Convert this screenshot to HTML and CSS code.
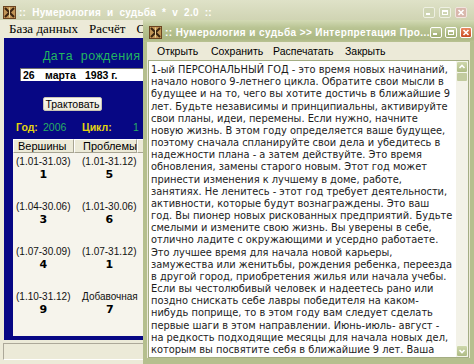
FILE: index.html
```html
<!DOCTYPE html>
<html lang="ru">
<head>
<meta charset="utf-8">
<title>Нумерология и судьба</title>
<link rel="stylesheet" href="styles.css">
</head>
<body>
<div class="main">
  <div class="title title-main">
    <svg class="ticon" viewBox="0 0 13 13" width="13" height="13">
      <rect x="0" y="0" width="13" height="13" fill="#c09455"/>
      <rect x="0.5" y="0.5" width="12" height="12" fill="none" stroke="#6b4420"/>
      <path d="M2 2 L11 11 M11 2 L2 11" stroke="#3a2410" stroke-width="2"/>
      <path d="M6.5 1.5 L6.5 11.5" stroke="#e8d29a" stroke-width="1"/>
    </svg>
    <span class="ttext ttext-main">:: Нумерология и судьба * v 2.0 ::</span>
    <div class="tbtns">
      <span class="tb tb-min inact"><i></i></span>
      <span class="tb tb-max inact"><i></i></span>
      <span class="tb tb-close inact-close">
        <svg viewBox="0 0 10 9" width="10" height="9"><path d="M2.5 2 L7.5 7 M7.5 2 L2.5 7" stroke="#fff" stroke-width="1.6"/></svg>
      </span>
    </div>
  </div>
  <div class="menubar">
    <span>База данных</span><span>Расчёт</span><span>О программе</span>
  </div>
  <div class="client">
    <div class="heading">Дата рождения</div>
    <div class="datebox"><span class="d-day">26</span><span class="d-mon">марта</span><span>1983 г.</span></div>
    <button class="btn" type="button">Трактовать</button>
    <div class="yearrow">
      <span class="lbl lbl-god">Год:</span><span class="val val-god">2006</span><span class="lbl lbl-cyc">Цикл:</span><span class="val">1</span>
    </div>
    <div class="grid">
      <div class="ghead">
        <div class="gh gh1">Вершины</div>
        <div class="gh gh2">Проблемы</div>
        <div class="gh gh3"></div>
      </div>
      <div class="gbody">
        <div class="cell c1"><span class="dt">(1.01-31.03)</span><span class="num">1</span></div>
        <div class="cell c2"><span class="dt">(1.01-31.12)</span><span class="num">5</span></div>
        <div class="cell c1"><span class="dt">(1.04-30.06)</span><span class="num">3</span></div>
        <div class="cell c2"><span class="dt">(1.01-30.06)</span><span class="num">6</span></div>
        <div class="cell c1"><span class="dt">(1.07-30.09)</span><span class="num">4</span></div>
        <div class="cell c2"><span class="dt">(1.07-31.12)</span><span class="num">1</span></div>
        <div class="cell c1"><span class="dt">(1.10-31.12)</span><span class="num">9</span></div>
        <div class="cell c2"><span class="dt">Добавочная</span><span class="num">7</span></div>
      </div>
    </div>
  </div>
  <div class="status"><div class="spanel"></div></div>
</div>

<div class="win2">
  <div class="title title-act">
    <svg class="ticon" viewBox="0 0 13 13" width="13" height="13">
      <rect x="0" y="0" width="13" height="13" fill="#c09455"/>
      <rect x="0.5" y="0.5" width="12" height="12" fill="none" stroke="#6b4420"/>
      <path d="M2 2 L11 11 M11 2 L2 11" stroke="#3a2410" stroke-width="2"/>
      <path d="M6.5 1.5 L6.5 11.5" stroke="#e8d29a" stroke-width="1"/>
    </svg>
    <span class="ttext ttext-act">:: Нумерология и судьба &gt;&gt; Интерпретация Про...</span>
    <div class="tbtns tbtns2">
      <span class="tb tb-min act"><i></i></span>
      <span class="tb tb-max act"><i></i></span>
      <span class="tb tb-close act-close">
        <svg viewBox="0 0 10 9" width="10" height="9"><path d="M2.5 2 L7.5 7 M7.5 2 L2.5 7" stroke="#fff" stroke-width="1.6"/></svg>
      </span>
    </div>
  </div>
  <div class="body2">
    <div class="toolbar">
      <span class="ti ti1">Открыть</span><span class="ti ti2">Сохранить</span><span class="ti ti3">Распечатать</span><span class="ti">Закрыть</span>
    </div>
    <div class="edit">
      <div class="text">1-ый ПЕРСОНАЛЬНЫЙ ГОД - это время новых начинаний,<br>начало нового 9-летнего цикла. Обратите свои мысли в<br>будущее и на то, чего вы хотите достичь в ближайшие 9<br>лет. Будьте независимы и принципиальны, активируйте<br>свои планы, идеи, перемены. Если нужно, начните<br>новую жизнь. В этом году определяется ваше будущее,<br>поэтому сначала спланируйте свои дела и убедитесь в<br>надежности плана - а затем действуйте. Это время<br>обновления, замены старого новым. Этот год может<br>принести изменения к лучшему в доме, работе,<br>занятиях. Не ленитесь - этот год требует деятельности,<br>активности, которые будут вознаграждены. Это ваш<br>год. Вы пионер новых рискованных предприятий. Будьте<br>смелыми и измените свою жизнь. Вы уверены в себе,<br>отлично ладите с окружающими и усердно работаете.<br>Это лучшее время для начала новой карьеры,<br>замужества или женитьбы, рождения ребенка, переезда<br>в другой город, приобретения жилья или начала учебы.<br>Если вы честолюбивый человек и надеетесь рано или<br>поздно снискать себе лавры победителя на каком-<br>нибудь поприще, то в этом году вам следует сделать<br>первые шаги в этом направлении. Июнь-июль- август -<br>на редкость подходящие месяцы для начала новых дел,<br>которым вы посвятите себя в ближайшие 9 лет. Ваша</div>
      <div class="sbar">
        <span class="sbtn"><svg viewBox="0 0 10 10" width="10" height="10"><path d="M2.5 6 L5 3.5 L7.5 6" fill="none" stroke="#fff" stroke-width="1.6"/></svg></span>
        <span class="sthumb"></span>
        <span class="strack"></span>
        <span class="sbtn"><svg viewBox="0 0 10 10" width="10" height="10"><path d="M2.5 4 L5 6.5 L7.5 4" fill="none" stroke="#fff" stroke-width="1.6"/></svg></span>
      </div>
    </div>
  </div>
</div>
</body>
</html>
```

FILE: styles.css
```css
* { box-sizing: border-box; }
html, body { margin: 0; padding: 0; }
body {
  width: 474px;
  height: 364px;
  overflow: hidden;
  position: relative;
  background: #ecead8;
  font-family: "Liberation Sans", Arial, sans-serif;
}

/* ---------- main window ---------- */
.main {
  width: 474px;
  height: 364px;
  display: flex;
  flex-direction: column;
  background: #ecead8;
}
.title {
  display: flex;
  align-items: center;
  flex: none;
}
.title-main {
  height: 20px;
  padding: 4px 0 0 3px;
  background: linear-gradient(#dfe2c8, #d0d4b3);
}
.ticon { flex: none; display: block; }
.ttext {
  color: #fff;
  font-weight: bold;
  font-size: 10px;
  margin-left: 3px;
  white-space: nowrap;
}
.ttext-main { letter-spacing: 0.25px; word-spacing: 3px; }
.ttext-act { letter-spacing: 0.4px; }
.tbtns {
  margin-left: auto;
  display: flex;
  gap: 4px;
  padding-right: 7px;
}
.tb {
  width: 12px;
  height: 11px;
  border: 1px solid #fff;
  border-radius: 2px;
  position: relative;
  display: flex;
  align-items: center;
  justify-content: center;
}
.tb i { position: absolute; display: block; }
.tb-min i { left: 2px; bottom: 2px; width: 4px; height: 2px; background: #fff; }
.tb-max i { left: 2px; top: 2px; width: 6px; height: 5px; border: 1px solid #fff; border-top-width: 2px; }
.inact { background: #cfd5b4; border-color: #eef0e2; }
.inact-close { background: #d9b7ac; border-color: #f1e4df; }
.act { background: linear-gradient(#c4cea0, #9eac70); }
.act-close { background: linear-gradient(#e98a62, #c94a22); }

.menubar {
  height: 18px;
  flex: none;
  display: flex;
  align-items: center;
  gap: 11px;
  padding-left: 9px;
  font-family: "Liberation Serif", "Times New Roman", serif;
  font-size: 13px;
  color: #000;
  white-space: nowrap;
}

.client {
  height: 302px;
  flex: none;
  margin: 0 4px;
  background: #070784;
  padding: 12px 0 5px 0;
  display: flex;
  flex-direction: column;
  align-items: flex-start;
}
.heading {
  margin-left: 39px;
  font-family: "Liberation Mono", "Courier New", monospace;
  font-size: 12.5px;
  line-height: 15px;
  color: #22b660;
  white-space: nowrap;
}
.datebox {
  margin: 3px 0 0 16px;
  width: 260px;
  height: 15px;
  background: #fff;
  border-top: 1px solid #6f6f6f;
  border-left: 1px solid #6f6f6f;
  padding-left: 2px;
  display: flex;
  align-items: center;
  font-weight: bold;
  font-size: 10.5px;
  color: #000;
  white-space: nowrap;
}
.d-day { width: 22px; }
.d-mon { width: 40px; }
.btn {
  margin: 16px 0 0 39px;
  width: 59px;
  height: 16px;
  padding: 0;
  border: 1px solid #c9c6b3;
  border-radius: 2px;
  background: linear-gradient(#fbfaf4, #ebe8d8);
  font-family: "Liberation Sans", Arial, sans-serif;
  font-size: 10.5px;
  color: #000;
}
.yearrow {
  margin: 11px 0 0 12px;
  height: 11px;
  line-height: 11px;
  display: flex;
  font-size: 10.5px;
  white-space: nowrap;
}
.lbl { color: #e4d40e; font-weight: bold; }
.val { color: #27ad62; }
.lbl-god { width: 27px; }
.val-god { width: 39px; }
.lbl-cyc { width: 51px; }

.grid {
  margin: 6px 0 0 9px;
  width: 320px;
  flex: 1;
  background: #f6f4ec;
  display: flex;
  flex-direction: column;
}
.ghead {
  height: 14px;
  display: flex;
  flex: none;
}
.gh {
  height: 14px;
  background: #ecead8;
  border-top: 1px solid #fff;
  border-left: 1px solid #fff;
  border-right: 1px solid #a8a593;
  border-bottom: 1px solid #a8a593;
  font-size: 11px;
  line-height: 12px;
  padding-left: 4px;
  color: #000;
  white-space: nowrap;
}
.gh1 { width: 61px; }
.gh2 { width: 63px; padding-left: 8px; }
.gh3 { flex: 1; }
.gbody {
  padding-top: 3px;
  display: grid;
  grid-template-columns: 61px 63px;
  grid-auto-rows: 45px;
}
.cell {
  justify-self: start;
  display: flex;
  flex-direction: column;
  align-items: center;
}
.c1 { margin-left: 3px; }
.c2 { margin-left: 8px; }
.dt {
  font-family: "Liberation Sans Narrow", "Arial Narrow", "Liberation Sans", sans-serif;
  font-size: 10px;
  line-height: 12px;
  color: #111;
  white-space: nowrap;
}
.num {
  font-family: "DejaVu Sans", Verdana, sans-serif;
  font-weight: bold;
  font-size: 11px;
  line-height: 14px;
  color: #000;
}

.status {
  height: 24px;
  flex: none;
  padding: 3px 3px 4px 3px;
}
.spanel {
  height: 17px;
  width: 300px;
  border: 1px solid;
  border-color: #aca899 #fff #fff #aca899;
}

/* ---------- second window ---------- */
.win2 {
  position: absolute;
  left: 143px;
  top: 20px;
  width: 331px;
  height: 344px;
  background: #b5bf8e;
  display: flex;
  flex-direction: column;
}
.title-act {
  height: 22px;
  padding: 2px 0 0 6px;
  background: linear-gradient(#d3dab5 0%, #b9c493 35%, #acb884 85%, #b9c292 100%);
}
.tbtns2 { gap: 3px; padding-right: 8px; }
.body2 {
  flex: 1;
  margin: 0 4px 6px 4px;
  background: #ecead8;
  display: flex;
  flex-direction: column;
}
.toolbar {
  height: 18px;
  flex: none;
  display: flex;
  align-items: center;
  padding-left: 10px;
  font-size: 10.5px;
  color: #000;
  white-space: nowrap;
}
.ti1 { width: 54px; }
.ti2 { width: 62px; }
.ti3 { width: 72px; }
.edit {
  flex: 1;
  margin: 0 1px;
  border: 1px solid #a4ad84;
  background: #fff;
  display: flex;
  overflow: hidden;
}
.text {
  flex: 1;
  padding: 3px 0 0 2px;
  font-family: "DejaVu Sans", Verdana, sans-serif;
  font-size: 9.85px;
  line-height: 12.17px;
  color: #1c1c1c;
  white-space: nowrap;
  overflow: hidden;
}
.sbar {
  width: 12px;
  flex: none;
  display: flex;
  flex-direction: column;
  background: #f3f2e8;
}
.sbtn {
  height: 12px;
  flex: none;
  border: 1px solid #f4f6ea;
  border-radius: 2px;
  background: linear-gradient(#cfd8ac, #aebb84);
  display: flex;
  align-items: center;
  justify-content: center;
}
.sthumb {
  height: 8px;
  flex: none;
  margin: 0 1px;
  border-radius: 1px;
  background: #c2cb9f;
}
.strack { flex: 1; }
```
